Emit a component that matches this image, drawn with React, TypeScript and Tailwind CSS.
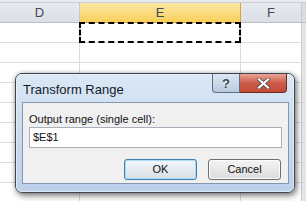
const rows = [0, 1, 2, 3, 4, 5, 6, 7, 8];

function TitleButtons() {
  return (
    <div className="absolute right-[7px] top-0 flex h-[19px]">
      {/* help */}
      <div className="flex w-[28px] items-center justify-center rounded-bl-[4px] border border-t-0 border-[#5d6f86] bg-gradient-to-b from-[#dde7f2] to-[#b9cadd] text-[13px] font-bold leading-none text-[#3a4654] [text-shadow:0_0_2px_#fff]">
        ?
      </div>
      {/* close */}
      <div className="flex w-[47px] items-center justify-center rounded-br-[4px] border border-l-0 border-t-0 border-[#6b2c24] bg-gradient-to-b from-[#e8a394] via-[#cb5b4a] to-[#c44a36]">
        <svg width="13" height="11" viewBox="0 0 13 11">
          <path d="M2 1.5 L11 9.5 M11 1.5 L2 9.5" stroke="#444" strokeWidth="3.6" strokeLinecap="square" />
          <path d="M2 1.5 L11 9.5 M11 1.5 L2 9.5" stroke="#fff" strokeWidth="2.2" strokeLinecap="square" />
        </svg>
      </div>
    </div>
  );
}

export default function App() {
  return (
    <div className="relative h-[201px] w-[306px] overflow-hidden bg-white font-['Liberation_Sans',Arial,sans-serif]">
      {/* sheet */}
      <div className="h-[3px] bg-[#e9ebee] border-b border-[#c9ced6]" />
      <div className="flex h-[20px] border-b border-[#b9bec7] text-[13px] leading-[19px] text-[#404a58]">
        <div className="w-[80px] border-r border-[#c5cad2] bg-gradient-to-b from-[#e6e9ee] to-[#dcdfe5] text-center">D</div>
        <div className="-mb-px w-[161px] border-r border-b border-[#e0a23a] bg-gradient-to-b from-[#fce8a3] to-[#f8cf58] text-center">E</div>
        <div className="w-[61px] border-r border-[#c5cad2] bg-gradient-to-b from-[#e6e9ee] to-[#dcdfe5] text-center">F</div>
        <div className="flex-1 bg-[#d8dce2]" />
      </div>
      {rows.map((r) => (
        <div key={r} className="flex h-[20px] border-b border-[#dadcdd]">
          <div className="w-[80px] border-r border-[#dadcdd]" />
          <div className="w-[161px] border-r border-[#dadcdd]" />
          <div className="w-[61px] border-r border-[#c8cbce]" />
          <div className="flex-1 bg-[#e4e6e8]" />
        </div>
      ))}

      {/* copy marquee */}
      <div className="absolute left-[79px] top-[22px] h-[21px] w-[162px] border-2 border-dashed border-black" />

      {/* dialog */}
      <div className="absolute left-[15px] top-[73px] h-[120px] w-[280px] rounded-[7px] border border-[#3d4550] bg-gradient-to-b from-[#dbe7f4] via-[#c9dbef] to-[#bcd1ea] shadow-[2px_3px_6px_rgba(0,0,0,0.45),0_0_4px_rgba(0,0,0,0.25)]">
        <div className="h-full rounded-[6px] border border-[#eef4fb]/70">
          <div className="pl-[6px] pt-[7px] text-[13px] leading-[15px] text-[#111a2a]">Transform Range</div>
          <TitleButtons />
          <div className="absolute left-[6px] right-[5px] top-[28px] bottom-[8px] border border-[#8796aa] bg-[#f0f0f0] px-[6px] pt-[10px]">
            <div className="text-[11px] leading-[13px] text-[#111]">Output range (single cell):</div>
            <div className="mt-[1px] h-[21px] border border-[#a9b0bb] bg-white pl-[3px] text-[11px] leading-[19px] text-[#111]">
              $E$1
            </div>
            <div className="mt-[11px] flex justify-end gap-[11px] pr-[1px]">
              <button className="h-[21px] w-[73px] rounded-[3px] border border-[#3c80b4] bg-gradient-to-b from-[#f2f7fb] to-[#d7dfe6] text-[11px] text-[#111] shadow-[inset_0_0_0_1px_#a9dbf4]">
                OK
              </button>
              <button className="h-[21px] w-[73px] rounded-[3px] border border-[#707070] bg-gradient-to-b from-[#f4f4f4] to-[#dcdcdc] text-[11px] text-[#111] shadow-[inset_0_0_0_1px_#fbfbfb]">
                Cancel
              </button>
            </div>
          </div>
        </div>
      </div>
    </div>
  );
}
